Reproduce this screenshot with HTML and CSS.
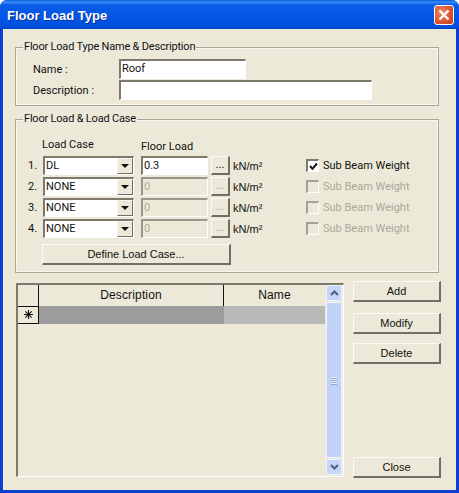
FILE: index.html
```html
<!DOCTYPE html>
<html lang="en">
<head>
    <meta charset="UTF-8">
    <meta name="viewport" content="width=device-width, initial-scale=1.0">
    <title>Floor Load Type</title>
    <link rel="stylesheet" href="styles.css">
</head>
<body>
    <div class="window">
        <header class="titlebar">
            <h1>Floor Load Type</h1>
            <div class="close-x">
                <svg width="12" height="12" viewBox="0 0 12 12"><path d="M1.5 1.5 L10.5 10.5 M10.5 1.5 L1.5 10.5" stroke="#fff" stroke-width="2.4" fill="none"/></svg>
            </div>
        </header>

        <div class="client">
            <fieldset class="group name-group">
                <legend>Floor Load Type Name &amp; Description</legend>
                <div class="name-row">
                    <label>Name :</label>
                    <div class="field name-field">Roof</div>
                </div>
                <div class="name-row">
                    <label>Description :</label>
                    <div class="field desc-field"></div>
                </div>
            </fieldset>

            <fieldset class="group load-group">
                <legend>Floor Load &amp; Load Case</legend>
                <div class="load-head">
                    <span class="head-case">Load Case</span>
                    <span class="head-load">Floor Load</span>
                </div>

                <div class="load-row">
                    <span class="num">1.</span>
                    <div class="combo"><span>DL</span><div class="combo-btn"><i class="arrow"></i></div></div>
                    <div class="field load-field">0.3</div>
                    <div class="btn dots">...</div>
                    <span class="unit">kN/m²</span>
                    <div class="check"><svg width="9" height="9" viewBox="0 0 9 9"><path d="M1 4 L3.5 6.8 L8 1.5" stroke="#111" stroke-width="2" fill="none"/></svg></div>
                    <span class="check-label">Sub Beam Weight</span>
                </div>
                <div class="load-row off">
                    <span class="num">2.</span>
                    <div class="combo"><span>NONE</span><div class="combo-btn"><i class="arrow"></i></div></div>
                    <div class="field load-field">0</div>
                    <div class="btn dots">...</div>
                    <span class="unit">kN/m²</span>
                    <div class="check"></div>
                    <span class="check-label">Sub Beam Weight</span>
                </div>
                <div class="load-row off">
                    <span class="num">3.</span>
                    <div class="combo"><span>NONE</span><div class="combo-btn"><i class="arrow"></i></div></div>
                    <div class="field load-field">0</div>
                    <div class="btn dots">...</div>
                    <span class="unit">kN/m²</span>
                    <div class="check"></div>
                    <span class="check-label">Sub Beam Weight</span>
                </div>
                <div class="load-row off">
                    <span class="num">4.</span>
                    <div class="combo"><span>NONE</span><div class="combo-btn"><i class="arrow"></i></div></div>
                    <div class="field load-field">0</div>
                    <div class="btn dots">...</div>
                    <span class="unit">kN/m²</span>
                    <div class="check"></div>
                    <span class="check-label">Sub Beam Weight</span>
                </div>

                <div class="btn define-btn">Define Load Case...</div>
            </fieldset>

            <section class="bottom">
                <div class="grid-box">
                    <div class="grid-main">
                        <div class="grid-row grid-header">
                            <div class="cell corner"></div>
                            <div class="cell">Description</div>
                            <div class="cell">Name</div>
                        </div>
                        <div class="grid-row grid-new">
                            <div class="cell corner">
                                <svg width="11" height="11" viewBox="0 0 11 11"><path d="M5.5 1 V10 M1 5.5 H10 M2.3 2.3 L8.7 8.7 M8.7 2.3 L2.3 8.7" stroke="#111" stroke-width="1.1" fill="none"/></svg>
                            </div>
                            <div class="cell cell-desc"></div>
                            <div class="cell cell-name"></div>
                        </div>
                    </div>
                    <div class="scrollbar">
                        <div class="scroll-btn"><svg width="9" height="6" viewBox="0 0 9 6"><path d="M1 5 L4.5 1.5 L8 5" stroke="#4d6185" stroke-width="2" fill="none"/></svg></div>
                        <div class="scroll-thumb"><i></i><i></i><i></i><i></i></div>
                        <div class="scroll-btn"><svg width="9" height="6" viewBox="0 0 9 6"><path d="M1 1 L4.5 4.5 L8 1" stroke="#4d6185" stroke-width="2" fill="none"/></svg></div>
                    </div>
                </div>

                <div class="actions">
                    <div class="btn action-btn add-btn">Add</div>
                    <div class="btn action-btn modify-btn">Modify</div>
                    <div class="btn action-btn">Delete</div>
                    <div class="btn action-btn close-btn">Close</div>
                </div>
            </section>
        </div>
    </div>
</body>
</html>
```

FILE: styles.css
```css
* {
    margin: 0;
    padding: 0;
    box-sizing: border-box;
}

body {
    font-family: Roboto, "Liberation Sans", sans-serif;
    font-size: 11px;
    color: #111;
    background-color: #fff;
}

.window {
    width: 459px;
    height: 493px;
    display: flex;
    flex-direction: column;
    background-color: #0a3fd0;
    border-radius: 7px 7px 0 0;
    overflow: hidden;
}

.titlebar {
    height: 29px;
    flex: none;
    display: flex;
    align-items: center;
    justify-content: space-between;
    padding: 1px 5px 0 7px;
    background: linear-gradient(#0a5be0 0, #3b8cf5 2px, #0a5ce6 5px, #0055e5 20px, #0250dc 26px, #0043c4 29px);
}

.titlebar h1 {
    font-family: "Liberation Sans", sans-serif;
    font-size: 13px;
    font-weight: bold;
    color: #fff;
    text-shadow: 1px 1px 0 #0a2f9c;
}

.close-x {
    width: 20px;
    height: 20px;
    display: flex;
    align-items: center;
    justify-content: center;
    border: 1px solid #fff;
    border-radius: 3px;
    background: radial-gradient(circle at 35% 35%, #ec8a68, #d9522b 60%, #c0401c);
}

.client {
    flex: 1;
    margin: 0 3px 3px 3px;
    padding: 11px 14px 0 12px;
    background-color: #ece9d8;
    border-left: 1px solid #f4f2e8;
}

.group {
    width: 424px;
    border: 1px solid #aca899;
    box-shadow: 0 0 0 1px #f7f6ef inset;
    margin-left: -1px;
}

.group legend {
    padding: 0 1px;
    height: 14px;
    line-height: 14px;
    letter-spacing: -0.2px;
}

.name-group {
    height: 66px;
    padding: 5px 0 0 17px;
}

.name-group legend {
    margin-left: -10px;
}

.name-row {
    display: flex;
    align-items: center;
    height: 20px;
    margin-bottom: 1px;
}

.name-row label {
    width: 86px;
}

/* sunken edit box */
.field {
    height: 100%;
    background-color: #fff;
    border: 1px solid #fff;
    border-top: 2px solid #7d7a6b;
    border-left: 2px solid #7d7a6b;
    padding-left: 1px;
    line-height: 16px;
}

.name-field {
    width: 127px;
}

.desc-field {
    width: 253px;
}

.load-group {
    height: 161px;
    margin-top: 6px;
    padding: 12px 0 0 10px;
}

.load-group legend {
    margin-left: -3px;
}

.load-head {
    height: 18px;
    display: grid;
    grid-template-columns: 115px auto;
    align-items: start;
}

.head-case {
    padding: 0 0 0 16px;
}

.head-load {
    padding-top: 2px;
}

.load-row {
    display: grid;
    grid-template-columns: 17px 91px 74px 19px 79px 17px auto;
    align-items: center;
    height: 19px;
    margin-bottom: 2px;
}

.num {
    padding-left: 2px;
}

.combo {
    height: 19px;
    display: flex;
    justify-content: space-between;
    background-color: #fff;
    border: 1px solid #fff;
    border-top: 2px solid #7d7a6b;
    border-left: 2px solid #7d7a6b;
    line-height: 16px;
    padding-left: 1px;
}

.combo-btn {
    width: 16px;
    height: 16px;
    display: flex;
    align-items: center;
    justify-content: center;
    background-color: #ece9d8;
    border: 1px solid #f7f6ef;
    border-right-color: #716f64;
    border-bottom-color: #716f64;
}

.arrow {
    width: 0;
    height: 0;
    border-left: 4px solid transparent;
    border-right: 4px solid transparent;
    border-top: 4px solid #111;
}

.load-field {
    margin-left: 7px;
    width: 67px;
    height: 19px;
}

/* raised push button */
.btn {
    display: flex;
    align-items: center;
    justify-content: center;
    background-color: #ece9d8;
    border: 1px solid #fbfaf5;
    border-right: 2px solid #716f64;
    border-bottom: 2px solid #716f64;
    font-family: "Liberation Sans", sans-serif;
}

.dots {
    width: 19px;
    height: 19px;
    margin-left: 3px;
    padding-bottom: 2px;
}

.unit {
    margin-left: 6px;
    font-family: "Liberation Sans", sans-serif;
}

.check {
    width: 13px;
    height: 13px;
    display: flex;
    align-items: center;
    justify-content: center;
    background-color: #fff;
    border: 1px solid #fff;
    border-top: 2px solid #7d7a6b;
    border-left: 2px solid #7d7a6b;
}

.load-row.off .field,
.load-row.off .check {
    background-color: #ece9d8;
}

.load-row.off .load-field,
.load-row.off .dots,
.load-row.off .check-label {
    color: #aca899;
}

.load-row.off .field {
    border-top-color: #9a9788;
    border-left-color: #9a9788;
}

.load-row.off .check {
    border-top-color: #a5a294;
    border-left-color: #a5a294;
}

.define-btn {
    width: 189px;
    height: 21px;
    margin: 6px 0 0 16px;
}

.bottom {
    display: flex;
    align-items: flex-start;
    margin-top: 8px;
}

.grid-box {
    width: 328px;
    height: 194px;
    display: flex;
    margin-top: 2px;
    border: 2px solid #7d7a6b;
    border-right-color: #fff;
    border-bottom-color: #fff;
    border-right-width: 1px;
    border-bottom-width: 1px;
}

.grid-main {
    width: 307px;
}

.grid-row {
    display: grid;
    grid-template-columns: 21px 185px 101px;
}

.grid-header {
    height: 21px;
    text-align: center;
    font-family: "Liberation Sans", sans-serif;
    font-size: 12px;
    letter-spacing: 0.15px;
    line-height: 21px;
}

.grid-header .cell {
    border-right: 1px solid #111;
    border-bottom: 1px solid #111;
}

.grid-header .cell:last-child {
    border-right: 0;
}

.grid-new {
    height: 18px;
}

.corner {
    display: flex;
    align-items: center;
    justify-content: center;
    border-right: 1px solid #111;
    border-bottom: 1px solid #111;
}

.cell-desc {
    background-color: #9c9c9c;
}

.cell-name {
    background-color: #b8b8b8;
}

.scrollbar {
    width: 16px;
    height: 190px;
    margin-left: 1px;
    display: flex;
    flex-direction: column;
    gap: 1px;
}

.scroll-btn {
    height: 16px;
    flex: none;
    display: flex;
    align-items: center;
    justify-content: center;
    background-color: #c6d6f8;
    border: 1px solid #eef2fc;
}

.scroll-thumb {
    flex: 1;
    display: flex;
    flex-direction: column;
    align-items: center;
    justify-content: center;
    gap: 1px;
    background-color: #c1d2f7;
    border: 1px solid #eef2fc;
}

.scroll-thumb i {
    display: block;
    width: 6px;
    height: 1px;
    background-color: #eef2fc;
    box-shadow: 0 1px 0 #8ba5dc;
}

.actions {
    width: 88px;
    margin-left: 9px;
    display: flex;
    flex-direction: column;
}

.action-btn {
    height: 21px;
    margin-bottom: 9px;
}

.add-btn {
    margin-bottom: 11px;
}

.close-btn {
    margin-top: 84px;
}
```
